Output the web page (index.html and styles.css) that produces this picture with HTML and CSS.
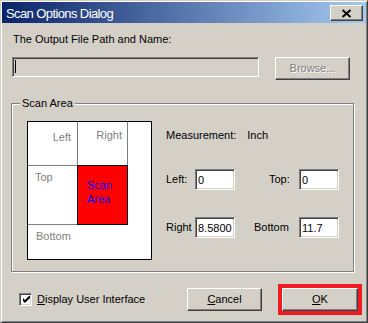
FILE: index.html
```html
<!DOCTYPE html>
<html>
<head>
<meta charset="utf-8">
<title>Scan Options Dialog</title>
<link rel="stylesheet" href="styles.css">
</head>
<body>
<div class="window">
  <div class="titlebar">
    <span class="title">Scan Options Dialog</span>
    <button class="close" type="button"><svg width="11" height="9" viewBox="0 0 11 9"><path d="M1.5 1 L9.5 8 M9.5 1 L1.5 8" stroke="#000" stroke-width="2" fill="none"/></svg></button>
  </div>
  <div class="content">
    <div class="label-path">The Output File Path and Name:</div>
    <div class="file-row">
      <div class="path-field"><span class="caret"></span></div>
      <button class="btn browse" type="button">Browse...</button>
    </div>
    <div class="group">
      <div class="legend">Scan Area</div>
      <div class="group-body">
        <div class="diagram">
          <div class="cell c-left">Left</div>
          <div class="cell c-right">Right</div>
          <div class="cell c-top">Top</div>
          <div class="cell c-scan">Scan<br>Area</div>
          <div class="cell c-bottom">Bottom</div>
        </div>
        <div class="fields">
          <div class="f-row"><span>Measurement:</span><span class="unit">Inch</span></div>
          <div class="f-row f-gap"><span class="lbl1">Left:</span><input class="num" type="text" value="0"><span class="lbl2 lbl-top">Top:</span><input class="num" type="text" value="0"></div>
          <div class="f-row f-gap"><span class="lbl1">Right</span><input class="num" type="text" value="8.5800"><span class="lbl2 lbl-bottom">Bottom</span><input class="num" type="text" value="11.7"></div>
        </div>
      </div>
    </div>
    <div class="bottom">
      <div class="check-wrap">
        <span class="checkbox"><svg width="7" height="7" viewBox="0 0 7 7"><path d="M0 2 L2 4 L6 0 L7 0 L7 2 L2 7 L0 5 Z" fill="#000"/></svg></span>
        <span class="check-label"><u>D</u>isplay User Interface</span>
      </div>
      <button class="btn cancel" type="button"><u>C</u>ancel</button>
      <div class="ok-frame"><button class="btn ok" type="button"><u>O</u>K</button></div>
    </div>
  </div>
</div>
</body>
</html>
```
FILE: styles.css
```css
html, body {
  margin: 0;
  padding: 0;
  background: #D4D0C8;
}
body {
  font-family: "Liberation Sans", Arial, sans-serif;
  font-size: 11px;
  line-height: 13px;
  color: #000;
}
.window {
  width: 368px;
  height: 323px;
  box-sizing: border-box;
  border: 1px solid;
  border-color: #D4D0C8 #404040 #404040 #D4D0C8;
  box-shadow: inset 1px 1px #fff, inset -1px -1px #808080;
  padding: 1px;
  display: flex;
  flex-direction: column;
  background: #D4D0C8;
}
.titlebar {
  height: 21px;
  flex: none;
  display: flex;
  align-items: center;
  justify-content: space-between;
  padding: 0 3px 0 4px;
  background: linear-gradient(to right, #0A246A, #A6CAF0);
}
.title {
  color: #fff;
  font-size: 13px;
  line-height: 21px;
  letter-spacing: -0.6px;
  padding-top: 1px;
}
.close {
  width: 33px;
  height: 16px;
  margin-top: 1px;
  padding: 0;
  box-sizing: border-box;
  border: 1px solid;
  border-color: #fff #404040 #404040 #fff;
  box-shadow: inset -1px -1px #808080;
  background: #D4D0C8;
  display: flex;
  align-items: center;
  justify-content: center;
}
.close svg { display: block; }
.content {
  flex: 1;
  padding-left: 10px;
  display: flex;
  flex-direction: column;
}
.label-path {
  margin-top: 10px;
  margin-left: 1px;
}
.file-row {
  display: flex;
  align-items: flex-start;
  margin-top: 11px;
}
.path-field {
  width: 247px;
  height: 20px;
  box-sizing: border-box;
  border: 1px solid;
  border-color: #808080 #fff #fff #808080;
  box-shadow: inset 1px 1px #404040, inset -1px -1px #D4D0C8;
  padding: 2px 0 0 2px;
  background: #D4D0C8;
}
.caret {
  display: block;
  width: 1px;
  height: 13px;
  background: #000;
}
.btn {
  font-family: "Liberation Sans", Arial, sans-serif;
  font-size: 11px;
  line-height: 13px;
  color: #000;
  background: #D4D0C8;
  box-sizing: border-box;
  border: 1px solid;
  border-color: #fff #404040 #404040 #fff;
  box-shadow: inset -1px -1px #808080;
  padding: 0;
  margin: 0;
}
.browse {
  margin-left: 16px;
  width: 75px;
  height: 23px;
  color: #808080;
  text-shadow: 1px 1px #fff;
}
.group {
  margin-top: 23px;
  margin-left: -1px;
  width: 343px;
  height: 169px;
  box-sizing: border-box;
  border: 1px solid #808080;
  box-shadow: 1px 1px #fff, inset 1px 1px #fff;
  display: flex;
  flex-direction: column;
  align-items: flex-start;
}
.legend {
  margin: -7px 0 0 8px;
  padding: 0 2px;
  background: #D4D0C8;
}
.group-body {
  display: flex;
  align-items: flex-start;
  margin-top: 11px;
}
.diagram {
  margin-left: 15px;
  border: 1px solid #000;
  background: #fff;
  display: grid;
  grid-template-columns: 49px 51px 23px;
  grid-template-rows: 43px 60px 34px;
  color: #808080;
}
.cell { box-sizing: border-box; }
.c-left {
  grid-column: 1;
  grid-row: 1;
  text-align: right;
  padding: 9px 6px 0 0;
}
.c-right {
  grid-column: 2;
  grid-row: 1;
  text-align: right;
  border-left: 1px solid #808080;
  border-right: 1px solid #808080;
  padding: 7px 5px 0 0;
}
.c-top {
  grid-column: 1;
  grid-row: 2;
  border-top: 1px solid #808080;
  border-bottom: 1px solid #808080;
  padding: 5px 0 0 7px;
}
.c-scan {
  grid-column: 2;
  grid-row: 2;
  border: 1px solid #000;
  background: #FF0000;
  color: #0000FF;
  line-height: 14px;
  padding: 12px 0 0 9px;
}
.c-bottom {
  grid-column: 1 / 4;
  grid-row: 3;
  padding: 5px 0 0 8px;
}
.fields {
  margin-left: 14px;
  margin-top: 8px;
}
.f-row {
  display: flex;
  align-items: center;
}
.f-gap { margin-top: 27px; }
.unit { margin-left: 11px; }
.lbl1 { width: 29px; }
.lbl2 {
  width: 64px;
  box-sizing: border-box;
}
.lbl-top { padding-left: 34px; }
.lbl-bottom { padding-left: 19px; }
.num {
  width: 40px;
  height: 21px;
  box-sizing: border-box;
  margin: 0;
  padding: 0 0 0 2px;
  font-family: "Liberation Sans", Arial, sans-serif;
  font-size: 11px;
  color: #000;
  background: #fff;
  border: 1px solid;
  border-color: #808080 #fff #fff #808080;
  box-shadow: inset 1px 1px #404040, inset -1px -1px #D4D0C8;
  outline: none;
}
.bottom {
  display: flex;
  align-items: center;
  margin-top: 12px;
  padding-right: 4px;
}
.check-wrap {
  flex: 1;
  display: flex;
  align-items: center;
  margin-left: 7px;
}
.checkbox {
  width: 13px;
  height: 13px;
  box-sizing: border-box;
  border: 1px solid;
  border-color: #808080 #fff #fff #808080;
  box-shadow: inset 1px 1px #404040, inset -1px -1px #D4D0C8;
  background: #fff;
  padding: 2px 0 0 3px;
}
.checkbox svg { display: block; }
.check-label { margin-left: 5px; }
.cancel {
  width: 75px;
  height: 23px;
}
.ok-frame {
  margin-left: 16px;
  border: 4px solid #ED1C24;
}
.ok {
  display: block;
  width: 76px;
  height: 23px;
}
```
